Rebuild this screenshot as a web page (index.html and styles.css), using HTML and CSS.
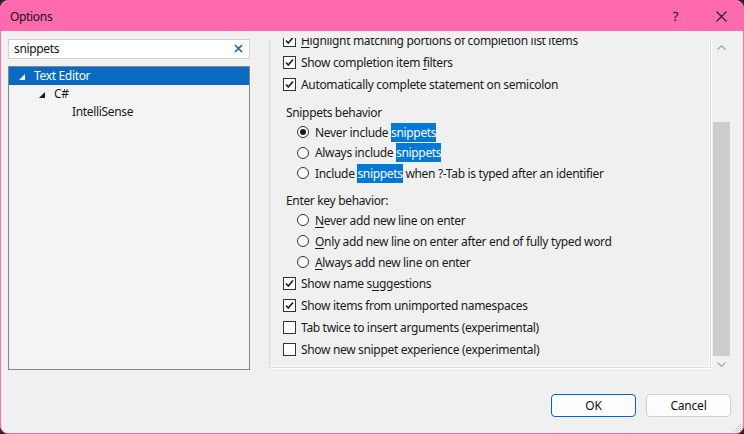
FILE: index.html
```html
<!DOCTYPE html>
<html>
<head>
<meta charset="utf-8">
<link rel="stylesheet" href="styles.css">
</head>
<body>
<div class="window">
  <header class="titlebar">
    <span class="title">Options</span>
    <div class="title-btns">
      <span class="help">?</span>
      <span class="close"><svg width="11" height="11" viewBox="0 0 11 11"><path d="M0.5 0.5 L10.5 10.5 M10.5 0.5 L0.5 10.5" stroke="#1a1a1a" stroke-width="1.1" fill="none"/></svg></span>
    </div>
  </header>
  <main class="main">
    <aside class="left">
      <div class="search">
        <span class="search-text">snippets</span>
        <svg class="search-clear" width="9" height="9" viewBox="0 0 9 9"><path d="M1 1 L8 8 M8 1 L1 8" stroke="#1c5fae" stroke-width="1.6" fill="none"/></svg>
      </div>
      <div class="tree">
        <div class="tree-row selected lvl0">
          <svg class="tri" width="6" height="6" viewBox="0 0 6 6"><polygon points="6,0 6,6 0,6" fill="#fff"/></svg>
          <span>Text Editor</span>
        </div>
        <div class="tree-row lvl1">
          <svg class="tri" width="6" height="6" viewBox="0 0 6 6"><polygon points="6,0 6,6 0,6" fill="#1a1a1a"/></svg>
          <span>C#</span>
        </div>
        <div class="tree-row lvl2"><span>IntelliSense</span></div>
      </div>
    </aside>
    <section class="right">
      <div class="panel">
        <div class="panel-content">
          <label class="check"><span class="box checked"><svg width="11" height="11" viewBox="0 0 11 11"><path d="M2 5.5 L4.3 8 L9 2.5" stroke="#222" stroke-width="1.7" fill="none"/></svg></span><span><u>H</u>ighlight matching portions of completion list items</span></label>
          <label class="check"><span class="box checked"><svg width="11" height="11" viewBox="0 0 11 11"><path d="M2 5.5 L4.3 8 L9 2.5" stroke="#222" stroke-width="1.7" fill="none"/></svg></span><span>Show completion item <u>f</u>ilters</span></label>
          <label class="check"><span class="box checked"><svg width="11" height="11" viewBox="0 0 11 11"><path d="M2 5.5 L4.3 8 L9 2.5" stroke="#222" stroke-width="1.7" fill="none"/></svg></span><span>Automatically complete statement on semicolon</span></label>

          <div class="group-head first">Snippets behavior</div>
          <label class="radio r1"><span class="circle on"></span><span>Never include <mark>snippets</mark></span></label>
          <label class="radio r1"><span class="circle"></span><span>Always include <mark>snippets</mark></span></label>
          <label class="radio r1"><span class="circle"></span><span>Include <mark>snippets</mark> when ?-Tab is typed after an identifier</span></label>

          <div class="group-head second">Enter key behavior:</div>
          <label class="radio r2"><span class="circle"></span><span><u>N</u>ever add new line on enter</span></label>
          <label class="radio r2"><span class="circle"></span><span><u>O</u>nly add new line on enter after end of fully typed word</span></label>
          <label class="radio r2"><span class="circle"></span><span><u>A</u>lways add new line on enter</span></label>

          <label class="check"><span class="box checked"><svg width="11" height="11" viewBox="0 0 11 11"><path d="M2 5.5 L4.3 8 L9 2.5" stroke="#222" stroke-width="1.7" fill="none"/></svg></span><span>Show name s<u>u</u>ggestions</span></label>
          <label class="check"><span class="box checked"><svg width="11" height="11" viewBox="0 0 11 11"><path d="M2 5.5 L4.3 8 L9 2.5" stroke="#222" stroke-width="1.7" fill="none"/></svg></span><span>Show items from unimported namespaces</span></label>
          <label class="check"><span class="box"></span><span>Tab twice to insert arguments (experimental)</span></label>
          <label class="check"><span class="box"></span><span>Show new snippet experience (experimental)</span></label>
        </div>
      </div>
      <div class="scrollbar">
        <svg class="arrow up" width="9" height="5" viewBox="0 0 9 5"><path d="M0.5 4.5 L4.5 0.8 L8.5 4.5" stroke="#a2a2a2" stroke-width="1.1" fill="none"/></svg>
        <div class="thumb"></div>
        <svg class="arrow down" width="9" height="5" viewBox="0 0 9 5"><path d="M0.5 0.5 L4.5 4.2 L8.5 0.5" stroke="#a2a2a2" stroke-width="1.1" fill="none"/></svg>
      </div>
    </section>
  </main>
  <footer class="footer">
    <button class="btn primary">OK</button>
    <button class="btn">Cancel</button>
    <svg class="grip" width="8" height="8" viewBox="0 0 8 8"><g fill="#b8b8b8"><rect x="6" y="0" width="1" height="1"/><rect x="4" y="2" width="1" height="1"/><rect x="6" y="2" width="1" height="1"/><rect x="2" y="4" width="1" height="1"/><rect x="4" y="4" width="1" height="1"/><rect x="6" y="4" width="1" height="1"/><rect x="0" y="6" width="1" height="1"/><rect x="2" y="6" width="1" height="1"/><rect x="4" y="6" width="1" height="1"/><rect x="6" y="6" width="1" height="1"/></g></svg>
  </footer>
</div>
</body>
</html>
```
FILE: styles.css
```css
* { box-sizing: border-box; }
html, body { margin: 0; padding: 0; }
body {
  background: #262626;
  font-family: "Noto Sans", "Liberation Sans", sans-serif;
  font-size: 12px;
  letter-spacing: -0.33px;
  color: #1a1a1a;
  width: 744px;
  height: 434px;
  overflow: hidden;
}
.window {
  width: 744px;
  height: 434px;
  background: #f0f0f0;
  border: 1px solid #ff69ae;
  border-radius: 8px;
  overflow: hidden;
  display: flex;
  flex-direction: column;
}
.titlebar {
  position: relative;
  z-index: 2;
  height: 30px;
  flex: none;
  background: #ff69ae;
  display: flex;
  align-items: center;
  justify-content: space-between;
  padding-left: 9px;
}
.title { font-size: 12px; color: #111; }
.title-btns { display: flex; align-items: center; height: 100%; }
.help { width: 46px; text-align: center; font-size: 13px; color: #111; padding-left: 3px; }
.close { width: 46px; height: 100%; display: flex; align-items: center; justify-content: center; padding-left: 2px; }

.main {
  flex: 1;
  display: flex;
  padding: 0 12px 0 7px;
  min-height: 0;
}
.left {
  width: 242px;
  flex: none;
  padding-top: 8px;
  display: flex;
  flex-direction: column;
}
.search {
  height: 20px;
  background: #fff;
  border: 1px solid #d0d0d0;
  display: flex;
  align-items: center;
  justify-content: space-between;
  padding: 0 6px 0 5px;
}
.search-text { color: #111; }
.tree {
  margin-top: 7px;
  height: 307px;
  background: #f4f4f4;
  border: 1px solid #868692;
}
.tree-row {
  height: 18px;
  display: flex;
  align-items: center;
}
.tree-row.selected { background: #0a6ac2; color: #fff; }
.tree-row.lvl0 { padding-left: 10px; }
.tree-row.lvl0 .tri { margin-right: 9px; margin-top: 2px; }
.tree-row.lvl1 { padding-left: 30px; }
.tree-row.lvl1 .tri { margin-right: 9px; margin-top: 2px; }
.tree-row.lvl2 { padding-left: 63px; }

.right {
  flex: 1;
  display: flex;
  margin-left: 19px;
  min-width: 0;
}
.panel {
  margin-top: 7px;
  width: 442px;
  height: 330px;
  border: 1px solid #d9dde3;
  border-top: none;
  box-shadow: 1px 1px 0 #fff, inset -1px -1px 0 #fff;
  overflow: hidden;
}
.panel-content {
  margin-top: -9px;
  padding-left: 13px;
}
.check {
  height: 22px;
  display: flex;
  align-items: center;
  white-space: nowrap;
}
.box {
  width: 13px;
  height: 13px;
  border: 1px solid #333;
  background: #fff;
  margin-right: 5px;
  display: flex;
  align-items: center;
  justify-content: center;
  flex: none;
}
.group-head {
  height: 18px;
  line-height: 18px;
  padding-left: 3px;
}
.group-head.first { margin-top: 9px; }
.group-head.second { margin-top: 8px; }
.radio {
  display: flex;
  align-items: center;
  padding-left: 14px;
  white-space: nowrap;
}
.radio.r1 { height: 20.5px; }
.radio.r2 { height: 21px; }
.circle {
  width: 12px;
  height: 12px;
  border-radius: 50%;
  border: 1px solid #333;
  background: #fff;
  margin-right: 6px;
  flex: none;
  display: flex;
  align-items: center;
  justify-content: center;
}
.circle.on::after {
  content: "";
  width: 6px;
  height: 6px;
  border-radius: 50%;
  background: #1a1a1a;
}
mark {
  background: #0078d7;
  color: #fff;
  padding: 1px 0;
}
u { text-underline-offset: 2px; }

.scrollbar {
  width: 19px;
  height: 337px;
  display: flex;
  flex-direction: column;
  align-items: center;
  padding-left: 1px;
}
.arrow.up { margin-top: 14px; }
.thumb {
  width: 17px;
  height: 234px;
  background: #cdcdcd;
  margin-top: 72px;
}
.arrow.down { margin-top: 6px; }

.footer {
  height: 63px;
  flex: none;
  display: flex;
  justify-content: flex-end;
  align-items: flex-start;
  padding: 24px 12px 0 0;
  gap: 10px;
  position: relative;
}
.btn {
  width: 85px;
  height: 23px;
  border-radius: 4px;
  border: 1px solid #cfcfcf;
  background: #fdfdfd;
  font-family: "Noto Sans", "Liberation Sans", sans-serif;
  font-size: 12px;
  letter-spacing: -0.2px;
  color: #111;
  padding: 0;
}
.btn.primary { border-color: #0067c0; }
.grip { position: absolute; right: 1px; bottom: 1px; }
```
